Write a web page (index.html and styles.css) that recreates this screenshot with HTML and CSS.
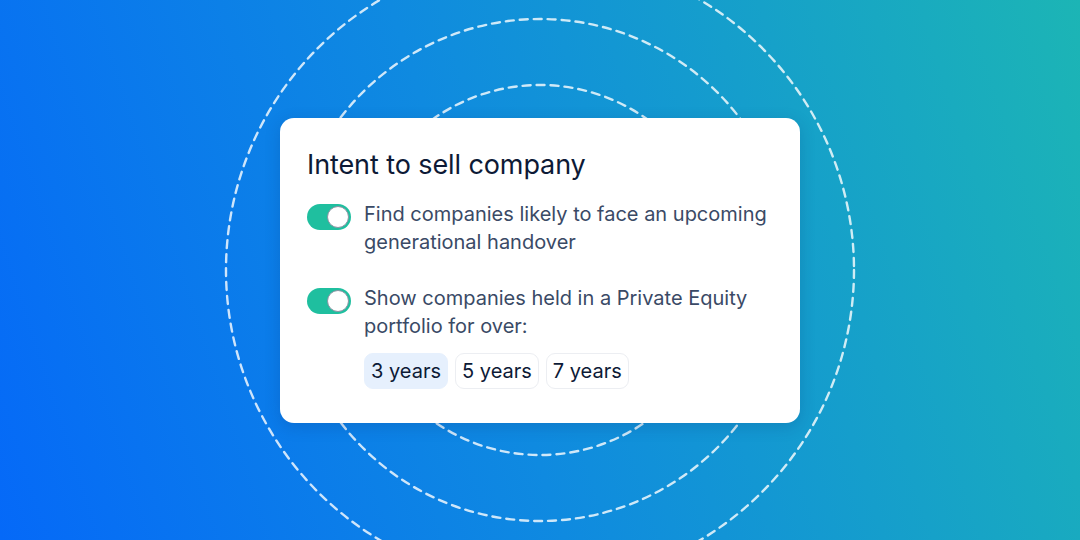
FILE: index.html
```html
<!DOCTYPE html>
<html>
<head>
<meta charset="utf-8">
<link rel="stylesheet" href="styles.css">
</head>
<body>
<div class="stage">
  <svg class="rings" width="1080" height="540" viewBox="0 0 1080 540">
    <g fill="none" stroke="rgba(255,255,255,0.8)" stroke-width="2.4" stroke-dasharray="8 6" stroke-linecap="round">
      <circle cx="540" cy="270" r="185"/>
      <circle cx="540" cy="270" r="251"/>
      <circle cx="540" cy="270" r="314"/>
    </g>
  </svg>
  <div class="card">
    <h1 class="title">Intent to sell company</h1>
    <div class="option">
      <span class="toggle"><span class="knob"></span></span>
      <div class="option-body">
        <p class="label">Find companies likely to face an upcoming generational handover</p>
      </div>
    </div>
    <div class="option">
      <span class="toggle"><span class="knob"></span></span>
      <div class="option-body">
        <p class="label">Show companies held in a Private Equity portfolio for over:</p>
        <div class="chips">
          <span class="chip active">3 years</span>
          <span class="chip">5 years</span>
          <span class="chip">7 years</span>
        </div>
      </div>
    </div>
  </div>
</div>
</body>
</html>
```
FILE: styles.css
```css
* { box-sizing: border-box; }
html, body { margin: 0; padding: 0; }
body {
  width: 1080px;
  height: 540px;
  overflow: hidden;
  font-family: Inter, "Noto Sans", sans-serif;
}
.stage {
  position: relative;
  width: 1080px;
  height: 540px;
  background: linear-gradient(72deg, #0569f8 0%, #0f8ae0 45%, #1cb5b5 100%);
  display: flex;
  align-items: center;
  justify-content: center;
}
.rings {
  position: absolute;
  left: 0;
  top: 0;
}
.card {
  position: relative;
  width: 520px;
  height: 305px;
  background: #fff;
  border-radius: 14px;
  box-shadow: 0 4px 16px rgba(10, 40, 100, 0.18);
  padding: 30px 20px 0 27px;
}
.title {
  margin: 0 0 18px 0;
  font-size: 27px;
  font-weight: 400;
  line-height: 34px;
  color: #0d1a36;
  letter-spacing: -0.1px;
}
.option {
  display: flex;
  gap: 13px;
  margin-bottom: 28px;
}
.toggle {
  flex: none;
  width: 44px;
  height: 26px;
  border-radius: 13px;
  background: #1fbf9f;
  display: flex;
  align-items: center;
  justify-content: flex-end;
  padding-right: 2px;
  margin-top: 4px;
}
.knob {
  width: 22px;
  height: 22px;
  border-radius: 50%;
  background: #fff;
  border: 1.5px solid #8a93a3;
}
.option-body { flex: 1; }
.label {
  margin: 0;
  font-size: 20px;
  line-height: 28px;
  color: #3a4a66;
}
.chips {
  display: flex;
  gap: 7px;
  margin-top: 13px;
}
.chip {
  height: 36px;
  padding: 0 6px;
  border-radius: 9px;
  border: 1px solid #eceef2;
  display: flex;
  align-items: center;
  font-size: 20px;
  color: #0d1a36;
}
.chip.active {
  background: #e6f0fd;
  border-color: #e6f0fd;
}
```
